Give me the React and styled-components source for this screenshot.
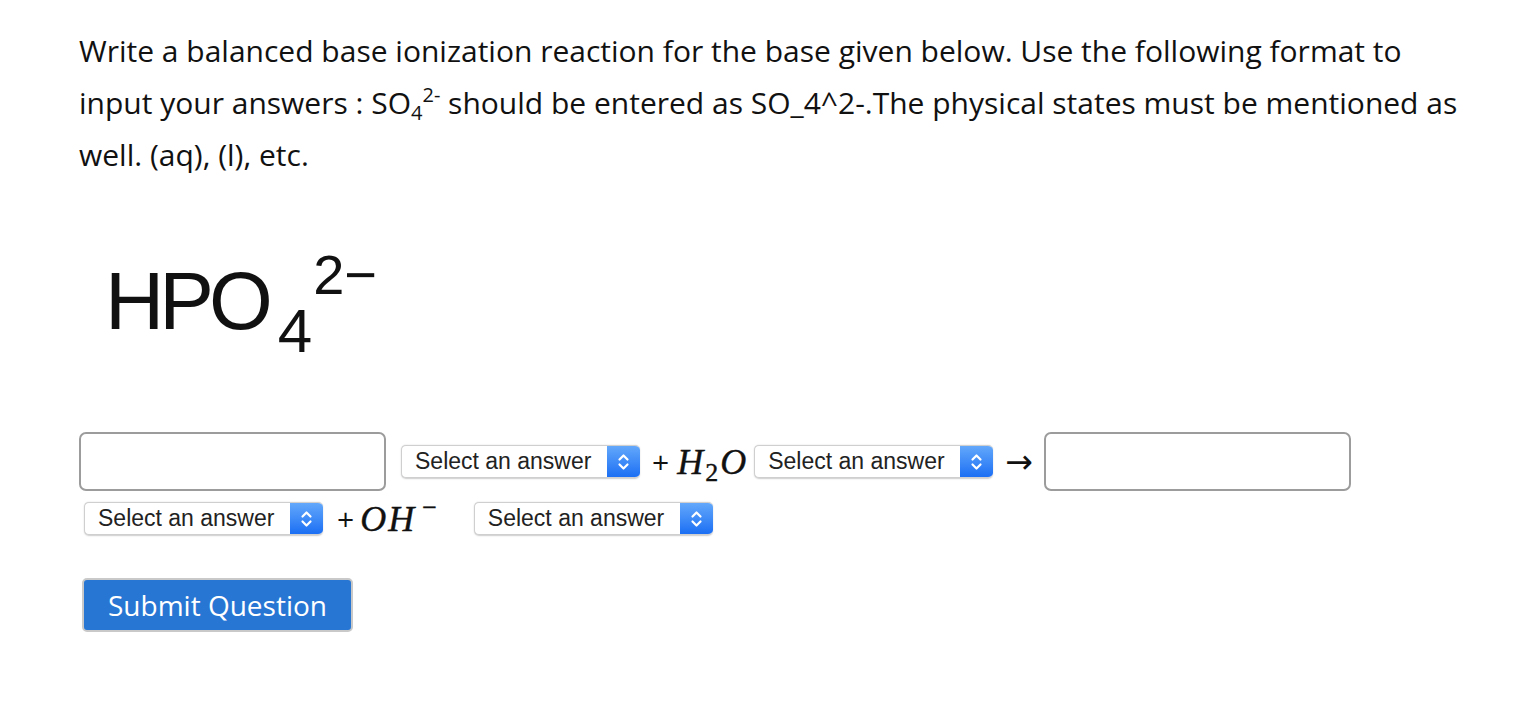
import React from "react";
import styled, { createGlobalStyle } from "styled-components";

const Global = createGlobalStyle`
  html, body { margin: 0; padding: 0; background: #fff; }
  body { font-family: "Open Sans", "Noto Sans", sans-serif; color: #111; }
`;

const Page = styled.div`
  width: 1524px;
  height: 706px;
  box-sizing: border-box;
  padding: 25px 0 0 79px;
`;

const Prompt = styled.p`
  margin: 0;
  width: 1392px;
  font-size: 30px;
  line-height: 52px;
  color: #111;
`;

const Sup = styled.sup`
  font-size: 20px;
  vertical-align: 12px;
  line-height: 0;
`;
const Sub = styled.sub`
  font-size: 20px;
  vertical-align: -6px;
  line-height: 0;
`;

const Formula = styled.div`
  margin: 66px 0 0 26px;
  height: 130px;
  font-family: "Liberation Sans", Arial, sans-serif;
  color: #111;
  display: flex;
  align-items: flex-start;
`;
const FormulaPart = styled.span`
  font-size: ${(p) => p.$size}px;
  line-height: 1;
  margin-top: ${(p) => p.$top || 0}px;
  margin-left: ${(p) => p.$left || 0}px;
  letter-spacing: ${(p) => p.$spacing || 0}px;
`;

const Equation = styled.div`
  margin-top: 55px;
  display: flex;
  flex-direction: column;
  gap: 11px;
`;

const Row = styled.div`
  display: flex;
  align-items: center;
  height: ${(p) => p.$height}px;
  padding-left: ${(p) => p.$indent || 0}px;
`;

const TextBox = styled.input`
  box-sizing: border-box;
  width: 307px;
  height: 59px;
  border: 2px solid #9c9c9c;
  border-radius: 7px;
  background: #fff;
  margin: 0 ${(p) => p.$mr || 0}px 0 ${(p) => p.$ml || 0}px;
  outline: none;
  font-size: 22px;
`;

const Select = styled.div`
  box-sizing: border-box;
  width: 239px;
  height: 33px;
  display: flex;
  align-items: stretch;
  border-radius: 5px;
  border: 1px solid #cfcfcf;
  border-right: none;
  box-shadow: 0 0.5px 1.5px rgba(0, 0, 0, 0.2);
  background: #fff;
  margin: 0 ${(p) => p.$mr || 0}px 0 ${(p) => p.$ml || 0}px;
  overflow: hidden;
  font-family: "Liberation Sans", Arial, sans-serif;
  font-size: 23px;
  color: #222;
`;
const SelectLabel = styled.span`
  flex: 1;
  display: flex;
  align-items: center;
  padding-left: 13px;
  white-space: nowrap;
`;
const SelectArrow = styled.span`
  width: 33px;
  display: flex;
  align-items: center;
  justify-content: center;
  background: linear-gradient(#63a8fb, #1c6ff4);
`;

const Plus = styled.span`
  font-family: "Open Sans", "Noto Sans", sans-serif;
  font-size: 30px;
  line-height: 1;
  color: #111;
  margin-right: ${(p) => p.$mr || 6}px;
`;

const Math = styled.span`
  font-family: "Liberation Serif", "Times New Roman", serif;
  font-style: italic;
  font-size: 36px;
  letter-spacing: 2px;
  color: #111;
  line-height: 1;
  display: inline-flex;
  align-items: baseline;
  margin: 0 ${(p) => p.$mr || 0}px 0 0;
  -webkit-text-stroke: 0.4px #111;
`;
const MathSub = styled.span`
  font-style: normal;
  font-size: 26px;
  position: relative;
  top: 7px;
`;
const MathSup = styled.span`
  font-style: normal;
  font-size: 26px;
  position: relative;
  top: -15px;
  margin-left: 6px;
`;

const Arrow = styled.span`
  font-family: "DejaVu Sans", sans-serif;
  font-size: 33px;
  line-height: 1;
  color: #111;
  margin: 0 11px 0 12px;
`;

const Submit = styled.button`
  margin: 43px 0 0 3px;
  box-sizing: border-box;
  width: 271px;
  height: 54px;
  background: #2776d4;
  border: 2px solid #c9c9c9;
  border-radius: 5px;
  color: #fff;
  font-family: "Open Sans", "Noto Sans", sans-serif;
  font-size: 28px;
  padding: 0;
  cursor: pointer;
`;

function Chevrons() {
  return (
    <svg width="13" height="22" viewBox="0 0 13 22" fill="none">
      <path d="M2.5 8.5 L6.5 4.5 L10.5 8.5" stroke="#fff" strokeWidth="2.2" strokeLinecap="round" strokeLinejoin="round" />
      <path d="M2.5 13.5 L6.5 17.5 L10.5 13.5" stroke="#fff" strokeWidth="2.2" strokeLinecap="round" strokeLinejoin="round" />
    </svg>
  );
}

function AnswerSelect(props) {
  return (
    <Select {...props}>
      <SelectLabel>Select an answer</SelectLabel>
      <SelectArrow>
        <Chevrons />
      </SelectArrow>
    </Select>
  );
}

export default function App() {
  return (
    <>
      <Global />
      <Page>
        <Prompt>
          Write a balanced base ionization reaction for the base given below. Use the following format to
          input your answers : SO<Sub>4</Sub>
          <Sup>2-</Sup> should be entered as SO_4^2-.The physical states must be mentioned as well. (aq), (l), etc.
        </Prompt>
        <Formula>
          <FormulaPart $size={82} $top={13} $spacing={-5}>
            HPO
          </FormulaPart>
          <FormulaPart $size={62} $top={53} $left={10}>
            4
          </FormulaPart>
          <FormulaPart $size={56} $left={1}>
            2−
          </FormulaPart>
        </Formula>
        <Equation>
          <Row $height={59}>
            <TextBox $mr={15} />
            <AnswerSelect $mr={12} />
            <Plus $mr={8}>+</Plus>
            <Math $mr={6}>
              H<MathSub>2</MathSub>O
            </Math>
            <AnswerSelect />
            <Arrow>→</Arrow>
            <TextBox />
          </Row>
          <Row $height={33} $indent={5}>
            <AnswerSelect $mr={14} />
            <Plus $mr={6}>+</Plus>
            <Math $mr={35}>
              OH<MathSup>−</MathSup>
            </Math>
            <AnswerSelect />
          </Row>
        </Equation>
        <Submit>Submit Question</Submit>
      </Page>
    </>
  );
}
